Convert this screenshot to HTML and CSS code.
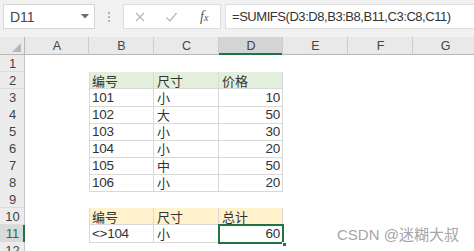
FILE: index.html
```html
<!DOCTYPE html>
<html lang="zh">
<head>
<meta charset="utf-8">
<title>SUMIFS</title>
<link rel="stylesheet" href="styles.css">
</head>
<body>
<div class="app">
  <div class="fbar">
    <div class="namebox">
      <span>D11</span>
      <svg class="dd" width="8" height="5" viewBox="0 0 8 5"><path d="M0 0H8L4 4.5Z" fill="#6b6b6b"/></svg>
    </div>
    <div class="grip"><i></i><i></i><i></i></div>
    <div class="btns">
      <svg class="ico" width="12" height="12" viewBox="0 0 12 12"><path d="M2 2L10 10M10 2L2 10" stroke="#b9b9b9" stroke-width="1.3" fill="none"/></svg>
      <svg class="ico" width="13" height="12" viewBox="0 0 13 12"><path d="M1.5 6.5L5 10L11.5 2" stroke="#b9b9b9" stroke-width="1.3" fill="none"/></svg>
      <span class="fx">f<span class="fxs">x</span></span>
    </div>
    <div class="formula">=SUMIFS(D3:D8,B3:B8,B11,C3:C8,C11)</div>
  </div>

  <div class="sheet">
    <div class="row hdr">
      <div class="corner"><svg width="9" height="9" viewBox="0 0 9 9"><path d="M9 0V9H0Z" fill="#b7b7b7"/></svg></div>
      <div class="ch">A</div><div class="ch">B</div><div class="ch">C</div><div class="ch sel">D</div><div class="ch">E</div><div class="ch">F</div><div class="ch">G</div>
    </div>
    <div class="row"><div class="rh">1</div><div class="c"></div><div class="c"></div><div class="c"></div><div class="c"></div><div class="c"></div><div class="c"></div><div class="c"></div></div>
    <div class="row"><div class="rh">2</div><div class="c"></div><div class="c t l green zh">编号</div><div class="c t green zh">尺寸</div><div class="c t green zh">价格</div><div class="c"></div><div class="c"></div><div class="c"></div></div>
    <div class="row"><div class="rh">3</div><div class="c"></div><div class="c t l">101</div><div class="c t zh">小</div><div class="c t n">10</div><div class="c"></div><div class="c"></div><div class="c"></div></div>
    <div class="row"><div class="rh">4</div><div class="c"></div><div class="c t l">102</div><div class="c t zh">大</div><div class="c t n">50</div><div class="c"></div><div class="c"></div><div class="c"></div></div>
    <div class="row"><div class="rh">5</div><div class="c"></div><div class="c t l">103</div><div class="c t zh">小</div><div class="c t n">30</div><div class="c"></div><div class="c"></div><div class="c"></div></div>
    <div class="row"><div class="rh">6</div><div class="c"></div><div class="c t l">104</div><div class="c t zh">小</div><div class="c t n">20</div><div class="c"></div><div class="c"></div><div class="c"></div></div>
    <div class="row"><div class="rh">7</div><div class="c"></div><div class="c t l">105</div><div class="c t zh">中</div><div class="c t n">50</div><div class="c"></div><div class="c"></div><div class="c"></div></div>
    <div class="row"><div class="rh">8</div><div class="c"></div><div class="c t l">106</div><div class="c t zh">小</div><div class="c t n">20</div><div class="c"></div><div class="c"></div><div class="c"></div></div>
    <div class="row"><div class="rh">9</div><div class="c"></div><div class="c"></div><div class="c"></div><div class="c"></div><div class="c"></div><div class="c"></div><div class="c"></div></div>
    <div class="row"><div class="rh">10</div><div class="c"></div><div class="c t l yellow zh">编号</div><div class="c t yellow zh">尺寸</div><div class="c t yellow zh">总计</div><div class="c"></div><div class="c"></div><div class="c"></div></div>
    <div class="row"><div class="rh sel">11</div><div class="c"></div><div class="c t l">&lt;&gt;104</div><div class="c t zh">小</div><div class="c t n act">60</div><div class="c"></div><div class="c"></div><div class="c"></div></div>
    <div class="row"><div class="rh">12</div><div class="c"></div><div class="c"></div><div class="c"></div><div class="c"></div><div class="c"></div><div class="c"></div><div class="c"></div></div>
  </div>

  <div class="wm">CSDN @迷糊大叔</div>
</div>
</body>
</html>
```

FILE: styles.css
```css
html, body {
  margin: 0;
  padding: 0;
  background: #ffffff;
}

.app {
  position: relative;
  width: 474px;
  height: 251px;
  overflow: hidden;
  font-family: "Liberation Sans", "Noto Sans CJK SC", sans-serif;
  color: #333333;
}

/* ---------- formula bar ---------- */
.fbar {
  display: flex;
  align-items: flex-start;
  height: 37px;
  padding-top: 4px;
  box-sizing: border-box;
  background: #f1f1f1;
}

.namebox {
  flex: 0 0 92px;
  display: flex;
  align-items: center;
  justify-content: space-between;
  height: 25px;
  margin-left: 3px;
  padding: 0 5px 0 6px;
  box-sizing: border-box;
  background: #ffffff;
  border: 1px solid #d6d6d6;
  font-size: 14px;
  color: #444444;
}

.grip {
  flex: 0 0 28px;
  display: flex;
  flex-direction: column;
  align-items: center;
  justify-content: center;
  gap: 2px;
  height: 25px;
}

.grip i {
  display: block;
  width: 2px;
  height: 2px;
  background: #b4b4b4;
}

.btns {
  flex: 0 0 98px;
  display: flex;
  align-items: center;
  height: 25px;
  box-sizing: border-box;
  background: #ffffff;
  border: 1px solid #dedede;
  padding-left: 10px;
  gap: 19px;
}

.fx {
  margin-left: 3px;
  font-family: "Liberation Serif", serif;
  font-style: italic;
  font-size: 14px;
  color: #555555;
}

.fxs {
  font-size: 10px;
}

.formula {
  flex: 1 1 auto;
  min-width: 0;
  overflow: hidden;
  height: 25px;
  margin-left: 4px;
  padding-left: 6px;
  box-sizing: border-box;
  background: #ffffff;
  border: 1px solid #dedede;
  border-right: none;
  font-size: 13px;
  letter-spacing: -0.45px;
  line-height: 23px;
  color: #333333;
  white-space: nowrap;
}

/* ---------- sheet ---------- */
.row {
  display: grid;
  grid-template-columns: 25px 64px 65px 65px 64px 65px 65px 65px;
  height: 17px;
}

.hdr {
  height: 18px;
  background: #e9e9e9;
}

.corner {
  display: flex;
  align-items: flex-end;
  justify-content: flex-end;
  padding: 0 4px 3px 0;
  box-shadow: inset -1px -1px 0 #b8b8b8;
}

.ch {
  text-align: center;
  font-size: 12.5px;
  line-height: 18px;
  color: #444444;
  box-shadow: inset -1px 0 0 #cdcdcd, inset 0 -1px 0 #b8b8b8;
}

.ch.sel {
  background: #d4d4d4;
  box-shadow: inset -1px 0 0 #cdcdcd, inset 0 -2px 0 #217346;
}

.rh {
  text-align: center;
  background: #ececec;
  font-size: 13px;
  line-height: 17px;
  color: #444444;
  box-shadow: inset -1px 0 0 #c4c4c4, inset 0 -1px 0 #dcdcdc;
}

.rh.sel {
  background: #dadada;
  color: #217346;
  box-shadow: inset -2px 0 0 #217346, inset 0 -1px 0 #dcdcdc;
}

.c {
  font-size: 13.5px;
  letter-spacing: -0.3px;
  line-height: 18px;
  padding-left: 3px;
  white-space: nowrap;
}

.zh {
  font-family: "Noto Sans CJK SC", sans-serif;
  font-size: 13px;
  letter-spacing: 0;
  line-height: 17px;
  overflow: hidden;
}

.t {
  box-shadow: inset -1px -1px 0 #d9d9d9;
}

.t.l {
  box-shadow: inset 1px 0 0 #d9d9d9, inset -1px -1px 0 #d9d9d9;
}

.green {
  background: #e2efda;
}

.yellow {
  background: #fff2cc;
}

.n {
  text-align: right;
  padding: 0 3px 0 0;
}

.act {
  position: relative;
  outline: 2px solid #217346;
  outline-offset: -1px;
}

.act::after {
  content: "";
  position: absolute;
  right: -4px;
  bottom: -4px;
  width: 5px;
  height: 5px;
  background: #217346;
  border: 1px solid #ffffff;
  box-sizing: border-box;
}

/* ---------- watermark ---------- */
.wm {
  position: absolute;
  left: 337px;
  top: 226px;
  font-family: "Liberation Sans", "Noto Sans CJK SC", sans-serif;
  font-size: 15px;
  line-height: 18px;
  color: #a6a6a6;
  white-space: nowrap;
}
```
